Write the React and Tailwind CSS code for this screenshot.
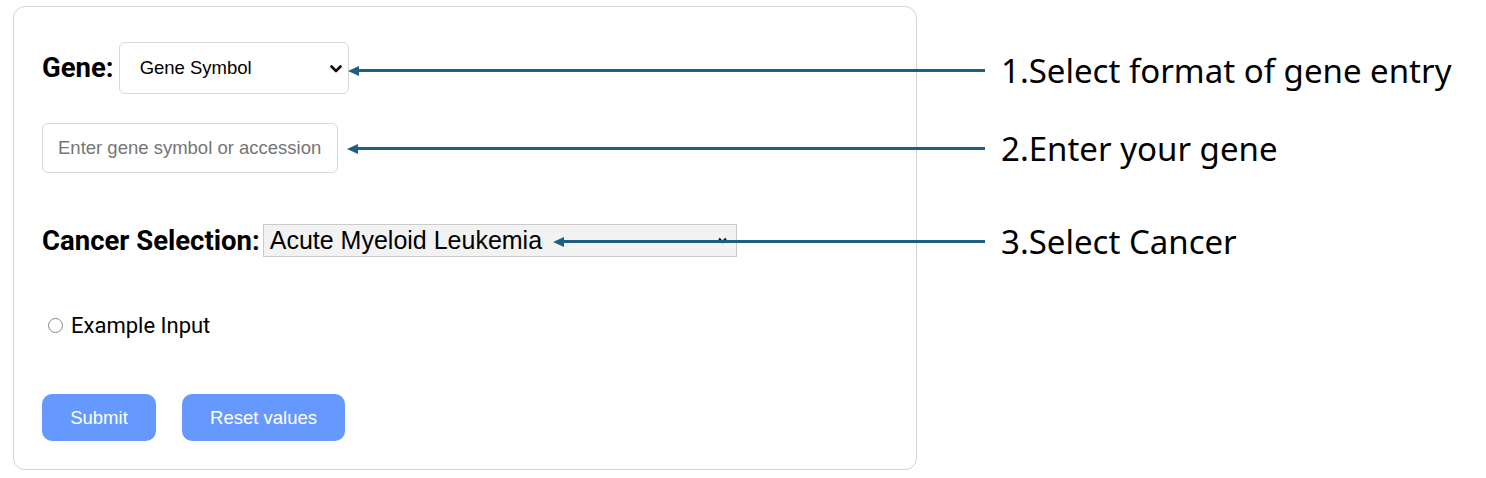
import { useState } from 'react';

function Chevron({ className }) {
  return (
    <svg className={className} viewBox="0 0 12 8" fill="none">
      <polyline points="1.5,1.5 6,6 10.5,1.5" stroke="#111" strokeWidth="2.6" strokeLinecap="round" strokeLinejoin="round" />
    </svg>
  );
}

function Annotation({ pos, lineWidth, label }) {
  return (
    <div className={`absolute flex items-center h-[41px] ${pos}`}>
      <svg width="11" height="10" viewBox="0 0 11 10" className="flex-none">
        <polygon points="0,5 11,0 11,10" fill="#1b5f82" />
      </svg>
      <div className={`h-[3px] bg-[#1b5f82] flex-none ${lineWidth}`} />
      <span className="ml-[16px] whitespace-nowrap text-[33px] text-black font-['Noto_Sans',sans-serif]">
        {label}
      </span>
    </div>
  );
}

export default function App() {
  const [example, setExample] = useState(false);

  return (
    <div className="relative w-[1486px] h-[478px] bg-white overflow-hidden">
      {/* form card */}
      <div className="ml-[13px] mt-[6px] w-[904px] h-[464px] border border-[#d3d3d3] rounded-[12px] pl-[28px] pt-[35px] flex flex-col">
        <div className="flex items-center h-[52px]">
          <span className="text-[27.5px] font-bold text-black font-['Roboto',sans-serif]">Gene:</span>
          <div className="relative ml-[5px] w-[230px] h-[52px] border border-[#d9d9d9] rounded-[6px] flex items-center pl-[20px] font-['Liberation_Sans',Arial,sans-serif] text-[18.5px] text-black">
            Gene Symbol
            <Chevron className="absolute right-[6px] top-[22px] w-[12px] h-[8px]" />
          </div>
        </div>

        <div className="mt-[29px] w-[296px] h-[50px] border border-[#d9d9d9] rounded-[6px] flex items-center pl-[15px]">
          <input
            className="w-full outline-none bg-transparent text-[18.5px] placeholder-[#757575] font-['Liberation_Sans',Arial,sans-serif]"
            placeholder="Enter gene symbol or accession"
          />
        </div>

        <div className="mt-[51px] flex items-center h-[33px]">
          <span className="text-[27.5px] font-bold text-black font-['Roboto',sans-serif]">Cancer Selection:</span>
          <div className="relative ml-[3px] w-[474px] h-[33px] bg-[#f2f2f2] border border-[#cbcbcb] flex items-center pl-[6px] font-['Liberation_Sans',Arial,sans-serif] text-[25px] text-black">
            Acute Myeloid Leukemia
            <svg className="absolute right-[9px] top-[12px] w-[9px] h-[7px]" viewBox="0 0 9 7" fill="none">
              <polyline points="1,1.5 4.5,5 8,1.5" stroke="#111" strokeWidth="2" />
            </svg>
          </div>
        </div>

        <label className="mt-[56px] flex items-center h-[24px] ml-[6px] cursor-pointer">
          <input
            type="radio"
            checked={example}
            onChange={() => setExample(true)}
            className="appearance-none w-[15px] h-[15px] rounded-full border-[1.5px] border-[#8a8a8a] bg-white"
          />
          <span className="ml-[8px] text-[22px] text-black font-['Roboto',sans-serif]">Example Input</span>
        </label>

        <div className="mt-[57px] flex gap-[26px]">
          <button className="w-[114px] h-[47px] rounded-[10px] bg-[#6699ff] text-white text-[18.5px] font-['Liberation_Sans',Arial,sans-serif]">
            Submit
          </button>
          <button className="w-[163px] h-[47px] rounded-[10px] bg-[#6699ff] text-white text-[18.5px] font-['Liberation_Sans',Arial,sans-serif]">
            Reset values
          </button>
        </div>
      </div>

      {/* callouts */}
      <Annotation pos="left-[348px] top-[50px]" lineWidth="w-[626px]" label="1.Select format of gene entry" />
      <Annotation pos="left-[347px] top-[128px]" lineWidth="w-[627px]" label="2.Enter your gene" />
      <Annotation pos="left-[553px] top-[221px]" lineWidth="w-[421px]" label="3.Select Cancer" />
    </div>
  );
}
